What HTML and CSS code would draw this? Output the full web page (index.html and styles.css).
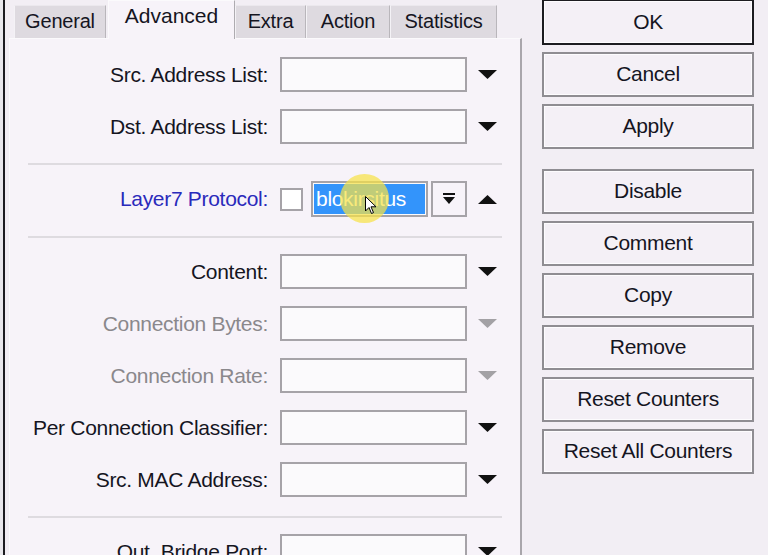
FILE: index.html
```html
<!DOCTYPE html>
<html>
<head>
<meta charset="utf-8">
<link rel="stylesheet" href="styles.css">
</head>
<body>
<div class="screen">
  <div class="edge"></div>
  <div class="dialog">
    <div class="tabpane">
      <div class="tabs">
        <div class="tab t-general">General</div>
        <div class="tab active t-adv">Advanced</div>
        <div class="tab t-extra">Extra</div>
        <div class="tab t-action">Action</div>
        <div class="tab t-stats">Statistics</div>
      </div>
      <div class="panel">
        <div class="row">
          <div class="label">Src. Address List:</div>
          <div class="field"></div>
          <div class="arrow"><svg width="19" height="9" viewBox="0 0 19 9"><polygon points="0,0 19,0 9.5,9" class="tri"/></svg></div>
        </div>
        <div class="row">
          <div class="label">Dst. Address List:</div>
          <div class="field"></div>
          <div class="arrow"><svg width="19" height="9" viewBox="0 0 19 9"><polygon points="0,0 19,0 9.5,9" class="tri"/></svg></div>
        </div>
        <div class="sep"></div>
        <div class="row row-l7">
          <div class="label blue">Layer7 Protocol:</div>
          <div class="check"></div>
          <div class="field sel-field">
            <span class="sel">blokirsitus</span>
            <div class="spot"></div>
            <svg class="cursor" width="12" height="19" viewBox="0 0 12 19"><path d="M0.5 0.5 L0.5 15 L4 11.5 L6.5 17.5 L8.5 16.6 L6 10.8 L11 10.8 Z" fill="#fff" stroke="#000" stroke-width="1" stroke-linejoin="round"/></svg>
          </div>
          <div class="mini-btn"><svg width="12" height="14" viewBox="0 0 12 14"><rect x="0" y="0" width="12" height="2" fill="#111"/><polygon points="0,4 12,4 6,11" fill="#111"/></svg></div>
          <div class="arrow up"><svg width="19" height="9" viewBox="0 0 19 9"><polygon points="0,9 19,9 9.5,0" class="tri"/></svg></div>
        </div>
        <div class="sep"></div>
        <div class="row">
          <div class="label">Content:</div>
          <div class="field"></div>
          <div class="arrow"><svg width="19" height="9" viewBox="0 0 19 9"><polygon points="0,0 19,0 9.5,9" class="tri"/></svg></div>
        </div>
        <div class="row disabled">
          <div class="label">Connection Bytes:</div>
          <div class="field"></div>
          <div class="arrow"><svg width="19" height="9" viewBox="0 0 19 9"><polygon points="0,0 19,0 9.5,9" class="tri"/></svg></div>
        </div>
        <div class="row disabled">
          <div class="label">Connection Rate:</div>
          <div class="field"></div>
          <div class="arrow"><svg width="19" height="9" viewBox="0 0 19 9"><polygon points="0,0 19,0 9.5,9" class="tri"/></svg></div>
        </div>
        <div class="row">
          <div class="label">Per Connection Classifier:</div>
          <div class="field"></div>
          <div class="arrow"><svg width="19" height="9" viewBox="0 0 19 9"><polygon points="0,0 19,0 9.5,9" class="tri"/></svg></div>
        </div>
        <div class="row">
          <div class="label">Src. MAC Address:</div>
          <div class="field"></div>
          <div class="arrow"><svg width="19" height="9" viewBox="0 0 19 9"><polygon points="0,0 19,0 9.5,9" class="tri"/></svg></div>
        </div>
        <div class="sep"></div>
        <div class="row">
          <div class="label">Out. Bridge Port:</div>
          <div class="field"></div>
          <div class="arrow"><svg width="19" height="9" viewBox="0 0 19 9"><polygon points="0,0 19,0 9.5,9" class="tri"/></svg></div>
        </div>
      </div>
    </div>
    <div class="buttons">
      <div class="btn default">OK</div>
      <div class="btn">Cancel</div>
      <div class="btn">Apply</div>
      <div class="btn spaced">Disable</div>
      <div class="btn">Comment</div>
      <div class="btn">Copy</div>
      <div class="btn">Remove</div>
      <div class="btn">Reset Counters</div>
      <div class="btn">Reset All Counters</div>
    </div>
  </div>
</div>
</body>
</html>
```

FILE: styles.css
```css
html, body {
  margin: 0;
  padding: 0;
}
body {
  width: 768px;
  height: 555px;
  overflow: hidden;
  background: #f2eef4;
  font-family: "Liberation Sans", Arial, sans-serif;
  color: #15151f;
}
.screen {
  display: flex;
  height: 555px;
  overflow: hidden;
}
.edge {
  width: 3px;
  flex: none;
  background: #e9e8ec;
}
.dialog {
  flex: 1;
  display: flex;
  border-left: 2px solid #1c1c20;
  background: #f2eef4;
}
.tabpane {
  width: 513px;
  margin-left: 4px;
  display: flex;
  flex-direction: column;
  flex: none;
}
.tabs {
  height: 38px;
  flex: none;
  display: flex;
  align-items: flex-end;
  padding-left: 5px;
  position: relative;
  z-index: 1;
}
.tab {
  height: 33px;
  line-height: 31px;
  box-sizing: border-box;
  font-size: 20px;
  text-align: center;
  background: #dedae0;
  border-top: 1px solid #ebe8ed;
  border-left: 1px solid #f4f2f6;
  border-right: 1px solid #b9b6bb;
  letter-spacing: -0.2px;
}
.t-general { width: 92px; margin-right: 2px; }
.t-adv { width: 127px; }
.t-extra { width: 71px; }
.t-action { width: 84px; }
.t-stats { width: 107px; }
.tab.active {
  height: 39px;
  line-height: 30px;
  margin-bottom: -1px;
  background: #f7f3f9;
  border-top: 1px solid #fbfafc;
  border-left: 1px solid #fbfafc;
  border-right: 1px solid #aeabb0;
  font-size: 21px;
  letter-spacing: 0;
}
.panel {
  flex: 1;
  display: flex;
  flex-direction: column;
  background: #f7f3f9;
  border-top: 1px solid #fbfafc;
  border-left: 1px solid #fbfafc;
  border-right: 2px solid #a9a6ab;
  padding-top: 18px;
}
.row {
  display: flex;
  align-items: center;
  height: 35px;
  flex: none;
  margin-bottom: 17px;
}
.label {
  width: 258px;
  flex: none;
  text-align: right;
  font-size: 21px;
  letter-spacing: -0.3px;
  white-space: nowrap;
}
.label.blue {
  color: #2a2abb;
}
.disabled .label {
  color: #8a888c;
}
.field {
  margin-left: 12px;
  width: 187px;
  height: 35px;
  box-sizing: border-box;
  border: 2px solid #a6a3a8;
  background: #fbfafc;
  flex: none;
}
.arrow {
  width: 40px;
  display: flex;
  justify-content: center;
  flex: none;
}
.tri {
  fill: #111;
}
.disabled .tri {
  fill: #a3a1a5;
}
.row-l7 {
  height: 36px;
}
.check {
  margin-left: 12px;
  width: 23px;
  height: 23px;
  box-sizing: border-box;
  border: 2px solid #a6a3a8;
  background: #fff;
  flex: none;
}
.sel-field {
  margin-left: 8px;
  width: 117px;
  height: 36px;
  padding: 1px;
  position: relative;
  overflow: visible;
}
.sel {
  display: block;
  height: 30px;
  line-height: 30px;
  background: #3394fb;
  color: #fff;
  font-size: 21px;
  padding-left: 2px;
  letter-spacing: -0.3px;
}
.spot {
  position: absolute;
  left: 27px;
  top: -9px;
  width: 49px;
  height: 49px;
  border-radius: 50%;
  background: rgba(246, 226, 70, 0.72);
}
.cursor {
  position: absolute;
  left: 52px;
  top: 13px;
}
.mini-btn {
  margin-left: 3px;
  width: 36px;
  height: 36px;
  box-sizing: border-box;
  border: 2px solid #a6a3a8;
  background: #f7f3f9;
  display: flex;
  align-items: center;
  justify-content: center;
  flex: none;
}
.mini-btn svg {
  margin-top: 2px;
}
.sep {
  height: 2px;
  flex: none;
  background: #dedbe0;
  margin: 2px 18px 16px 18px;
}
.buttons {
  margin-left: 20px;
  width: 212px;
  display: flex;
  flex-direction: column;
  gap: 7px;
  flex: none;
}
.btn {
  height: 45px;
  flex: none;
  box-sizing: border-box;
  border: 2px solid #8f8d92;
  box-shadow: inset 0 0 0 1px #fdfcfe;
  background: #f4f0f6;
  font-size: 21px;
  text-align: center;
  line-height: 40px;
  letter-spacing: -0.3px;
}
.btn.default {
  margin-top: -1px;
  height: 46px;
  border-color: #1c1c20;
  line-height: 42px;
}
.btn.spaced {
  margin-top: 13px;
}
```
